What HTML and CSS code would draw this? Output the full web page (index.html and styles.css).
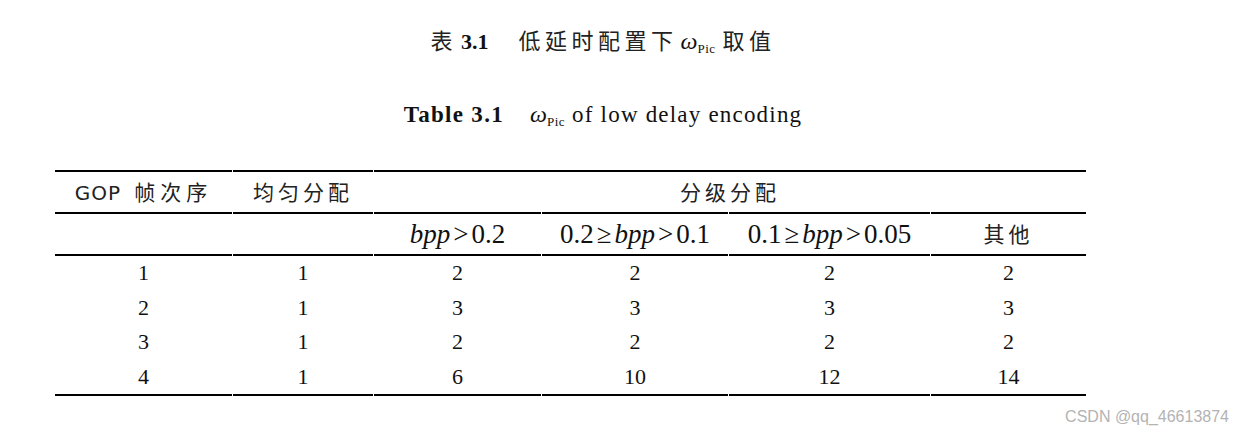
FILE: index.html
```html
<!DOCTYPE html>
<html lang="zh-CN">
<head>
<meta charset="utf-8">
<title>表 3.1 低延时配置下取值</title>
<link rel="stylesheet" href="styles.css">
</head>
<body>
<div class="page">
  <div class="title">
    <span class="cn">表</span><b class="num">3.1</b><span class="cn gap">低延时配置下</span><span class="omega">ω<sub>Pic</sub></span><span class="cn">取值</span>
  </div>
  <div class="caption">
    <b class="en-bold">Table 3.1</b><span class="omega cap-omega">ω<sub>Pic</sub></span><span class="en">of low delay encoding</span>
  </div>
  <table class="grid">
    <colgroup>
      <col class="c1"><col class="c2"><col class="c3"><col class="c4"><col class="c5"><col class="c6">
    </colgroup>
    <thead>
      <tr class="h1">
        <th><span class="latin">GOP</span><span class="cn after-latin">帧次序</span></th>
        <th><span class="cn">均匀分配</span></th>
        <th colspan="4"><span class="cn">分级分配</span></th>
      </tr>
      <tr class="h2">
        <th></th>
        <th></th>
        <th class="math"><i>bpp</i><span class="op">&gt;</span>0.2</th>
        <th class="math">0.2<span class="op">≥</span><i>bpp</i><span class="op">&gt;</span>0.1</th>
        <th class="math">0.1<span class="op">≥</span><i>bpp</i><span class="op">&gt;</span>0.05</th>
        <th><span class="cn">其他</span></th>
      </tr>
    </thead>
    <tbody>
      <tr><td>1</td><td>1</td><td>2</td><td>2</td><td>2</td><td>2</td></tr>
      <tr><td>2</td><td>1</td><td>3</td><td>3</td><td>3</td><td>3</td></tr>
      <tr><td>3</td><td>1</td><td>2</td><td>2</td><td>2</td><td>2</td></tr>
      <tr class="last"><td>4</td><td>1</td><td>6</td><td>10</td><td>12</td><td>14</td></tr>
    </tbody>
  </table>
  <div class="watermark">CSDN @qq_46613874</div>
</div>
</body>
</html>
```

FILE: styles.css
```css
html, body {
  margin: 0;
  padding: 0;
  background: #ffffff;
}

.page {
  width: 1243px;
  height: 434px;
  overflow: hidden;
  font-family: "Liberation Serif", "Noto Sans CJK SC", serif;
  color: #111111;
}

.cn {
  font-family: "Noto Sans CJK SC", sans-serif;
  font-weight: 400;
  letter-spacing: 4px;
  color: #222222;
  line-height: 1;
}

.title {
  width: 1206px;
  height: 30px;
  text-align: center;
  margin-top: 27px;
  font-size: 22px;
  line-height: 30px;
  white-space: nowrap;
}

.title .cn {
  letter-spacing: 4.5px;
}

.num {
  font-family: "Liberation Serif", serif;
  font-weight: 700;
  font-size: 22px;
  margin-left: 4px;
}

.gap {
  margin-left: 30px;
}

.omega {
  font-family: "Liberation Serif", serif;
  font-style: italic;
  font-size: 24px;
  line-height: 1;
  margin-right: 7px;
}

.title .omega {
  margin-left: 3px;
}

.omega sub {
  font-style: normal;
  font-size: 13px;
  line-height: 0;
  vertical-align: -4px;
  letter-spacing: 0.5px;
}

.caption {
  width: 1206px;
  height: 28px;
  text-align: center;
  margin-top: 44px;
  font-size: 23px;
  line-height: 28px;
  white-space: nowrap;
}

.en-bold {
  font-weight: 700;
  letter-spacing: 1.3px;
}

.cap-omega {
  margin-left: 26px;
  margin-right: 7px;
}

.en {
  letter-spacing: 1.2px;
}

.grid {
  margin-top: 41px;
  margin-left: 54px;
  border-collapse: separate;
  border-spacing: 1px 0;
  table-layout: fixed;
  width: 1033px;
}

.c1 { width: 177px; }
.c2 { width: 140px; }
.c3 { width: 167px; }
.c4 { width: 186px; }
.c5 { width: 201px; }
.c6 { width: 155px; }

.grid th,
.grid td {
  padding: 0;
  text-align: center;
  vertical-align: middle;
  font-weight: 400;
  white-space: nowrap;
  line-height: 1;
}

.h1 th {
  border-top: 2px solid #000000;
  height: 40px;
  font-size: 21px;
}

.h2 th {
  border-top: 2px solid #000000;
  border-bottom: 2px solid #000000;
  height: 40px;
  font-size: 21px;
}

.latin {
  font-family: "DejaVu Sans", sans-serif;
  font-size: 20px;
  letter-spacing: 1px;
  color: #222222;
}

.after-latin {
  margin-left: 13px;
  letter-spacing: 5px;
}

.grid th.math {
  font-family: "Liberation Serif", serif;
  font-size: 27px;
  color: #111111;
}

.op {
  margin: 0 3px;
}

.grid td {
  height: 34.5px;
  font-size: 22px;
  color: #111111;
}

.last td {
  border-bottom: 2px solid #000000;
}

.watermark {
  margin-top: 11px;
  padding-right: 14px;
  text-align: right;
  font-family: "Liberation Sans", Arial, sans-serif;
  font-size: 16px;
  line-height: 20px;
  color: #b3b3b3;
}
```
